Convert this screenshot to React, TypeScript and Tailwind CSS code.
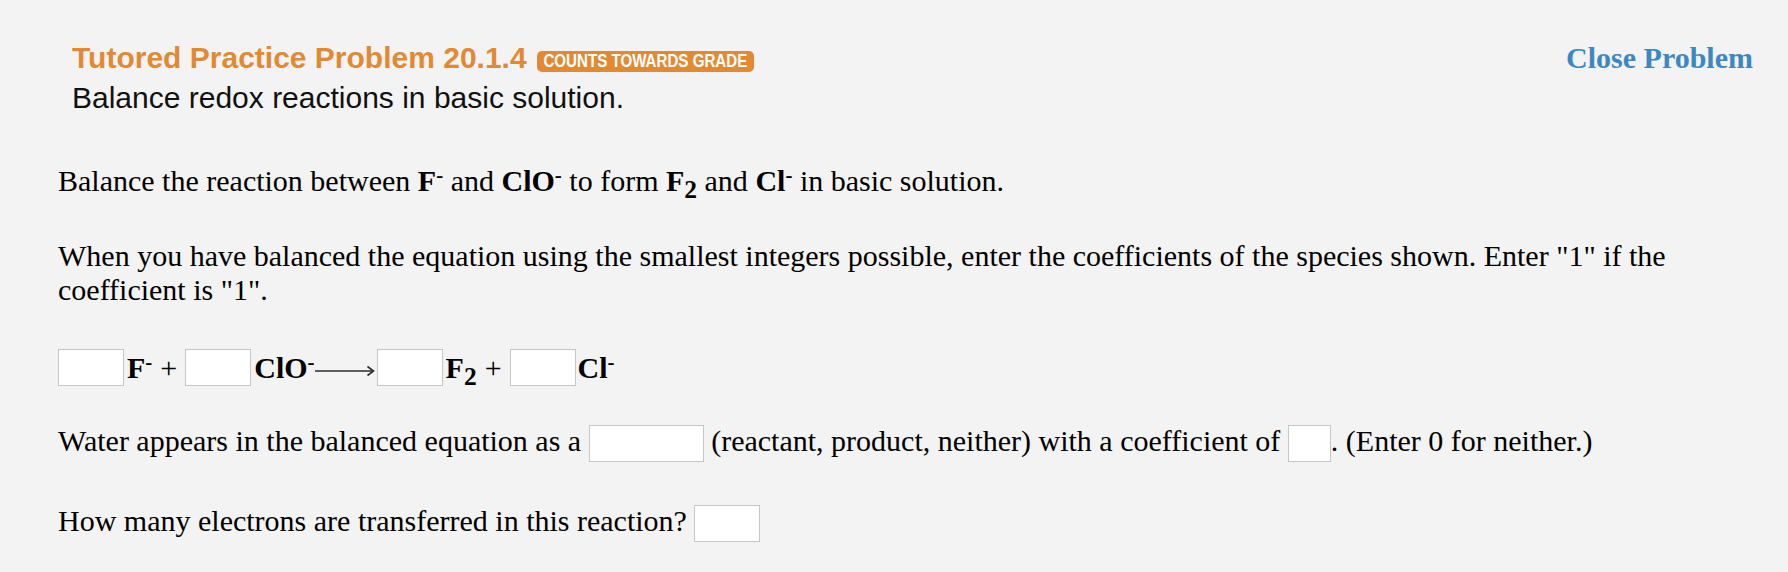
import React from "react";

const serif = { fontFamily: '"Liberation Serif", "Times New Roman", serif' };
const sans = { fontFamily: '"Liberation Sans", Arial, Helvetica, sans-serif' };

const Box = ({ w = "w-[66px]" }: { w?: string }) => (
    <input
        type="text"
        className={`${w} h-[37px] bg-white border border-[#c6c6c6] outline-none shrink-0`}
    />
);

const Minus = () => <span className="relative top-[-0.42em] text-[0.7em] leading-none">-</span>;
const Two = () => <span className="relative top-[0.28em] text-[0.85em] leading-none">2</span>;

const Arrow = () => (
    <svg width="60" height="14" viewBox="0 0 60 14" className="shrink-0 mt-[6px]">
        <line x1="0" y1="7" x2="58" y2="7" stroke="#2b2b2b" strokeWidth="1.6" />
        <path d="M52.5 2.5 L58.5 7 L52.5 11.5" fill="none" stroke="#2b2b2b" strokeWidth="1.6" />
    </svg>
);

export default function App() {
    return (
        <div className="min-h-screen w-full bg-[#f3f3f3] text-black">
            {/* header */}
            <header className="flex items-start justify-between pl-[72px] pr-[35px] pt-[38px]">
                <div style={sans}>
                    <div className="flex items-baseline h-[40px] leading-[40px]">
                        <span className="text-[30px] font-bold text-[#e28a33]">Tutored Practice Problem 20.1.4</span>
                        <span className="ml-[10px] self-center mt-[6px] flex w-[217px] h-[21px] items-center justify-center rounded-[5px] bg-[#e28a33] text-white">
                            <span className="inline-block scale-x-[0.84] whitespace-nowrap text-[18px] leading-[21px] font-bold">
                                COUNTS TOWARDS GRADE
                            </span>
                        </span>
                    </div>
                    <div className="text-[30px] leading-[40px] text-[#111]">Balance redox reactions in basic solution.</div>
                </div>
                <a href="#" style={serif} className="text-[30px] leading-[40px] font-bold text-[#3d87c2] no-underline">
                    Close Problem
                </a>
            </header>

            <main style={serif} className="pl-[58px] pr-[35px] pt-[46px] text-[30px] leading-[34px]">
                <p>
                    Balance the reaction between <b>F<Minus /></b> and <b>ClO<Minus /></b> to form <b>F<Two /></b> and{" "}
                    <b>Cl<Minus /></b> in basic solution.
                </p>

                <p className="mt-[41px]">
                    When you have balanced the equation using the smallest integers possible, enter the coefficients of the
                    species shown. Enter "1" if the coefficient is "1".
                </p>

                {/* equation */}
                <div className="mt-[42px] flex items-center h-[37px]">
                    <Box />
                    <b className="ml-[3px]">F<Minus /></b>
                    <span className="ml-[8px]">+</span>
                    <span className="ml-[8px]"><Box /></span>
                    <b className="ml-[3px]">ClO<Minus /></b>
                    <Arrow />
                    <span className="ml-[2px]"><Box /></span>
                    <b className="ml-[3px]">F<Two /></b>
                    <span className="ml-[8px]">+</span>
                    <span className="ml-[8px]"><Box /></span>
                    <b className="ml-[2px]">Cl<Minus /></b>
                </div>

                <div className="mt-[38px] flex items-center whitespace-pre">
                    <span className="pb-[4px]">Water appears in the balanced equation as a </span>
                    <Box w="w-[115px]" />
                    <span className="pb-[4px]"> (reactant, product, neither) with a coefficient of </span>
                    <Box w="w-[43px]" />
                    <span className="pb-[4px]">. (Enter 0 for neither.)</span>
                </div>

                <div className="mt-[42px] flex items-center whitespace-pre">
                    <span className="pb-[4px]">How many electrons are transferred in this reaction? </span>
                    <Box />
                </div>
            </main>
        </div>
    );
}
